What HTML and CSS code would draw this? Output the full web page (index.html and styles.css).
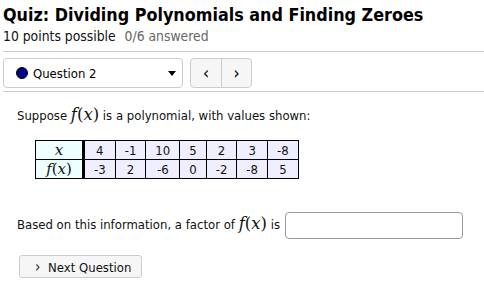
FILE: index.html
```html
<!DOCTYPE html>
<html lang="en">

<head>
  <meta charset="UTF-8">
  <meta name="viewport" content="width=device-width, initial-scale=1.0">
  <title>Quiz</title>
  <link rel="stylesheet" href="styles.css">
</head>

<body>
  <div class="quiz">
    <header class="quiz-head">
      <h1>Quiz: Dividing Polynomials and Finding Zeroes</h1>
      <div class="meta">10 points possible <span class="answered">0/6 answered</span></div>
    </header>

    <div class="qnav">
      <div class="qselect">
        <span class="dot"></span>
        <span class="qlabel">Question 2</span>
        <span class="caret"></span>
      </div>
      <div class="arrows">
        <button class="arrow">&lsaquo;</button>
        <button class="arrow">&rsaquo;</button>
      </div>
    </div>

    <section class="question">
      <p class="intro">Suppose <span class="fx"><i>f</i>(<i>x</i>)</span> is a polynomial, with values shown:</p>

      <table class="values">
        <tr>
          <th><span class="fx"><i>x</i></span></th>
          <td>4</td><td>-1</td><td>10</td><td>5</td><td>2</td><td>3</td><td>-8</td>
        </tr>
        <tr>
          <th><span class="fx"><i>f</i>(<i>x</i>)</span></th>
          <td>-3</td><td>2</td><td>-6</td><td>0</td><td>-2</td><td>-8</td><td>5</td>
        </tr>
      </table>

      <p class="answer">Based on this information, a factor of <span class="fx"><i>f</i>(<i>x</i>)</span> is <input type="text" class="answer-box"></p>

      <button class="next"><span class="chev">&rsaquo;</span> Next Question</button>
    </section>
  </div>
</body>

</html>
```

FILE: styles.css
```css
body {
  margin: 0;
  font-family: "DejaVu Sans Condensed", "Liberation Sans", sans-serif;
  color: #000;
}

.quiz {
  padding: 3px 0 0 3px;
}

.quiz-head h1 {
  margin: 0;
  font-size: 17.8px;
  line-height: 24px;
  font-weight: bold;
}

.meta {
  font-size: 13.8px;
  line-height: 18px;
  color: #111;
  padding-bottom: 6px;
  border-bottom: 1px solid #ccc;
}

.answered {
  color: #666;
  margin-left: 5px;
}

.qnav {
  display: flex;
  gap: 7px;
  padding: 6px 0 3px;
  border-bottom: 1px solid #ccc;
}

.qselect {
  width: 178px;
  height: 28px;
  border: 1px solid #ccc;
  border-radius: 4px;
  display: flex;
  align-items: center;
  font-size: 13px;
}

.dot {
  width: 10px;
  height: 10px;
  border-radius: 50%;
  background: #00008b;
  border: 1px solid #000;
  margin: 0 5px 0 12px;
}

.qlabel {
  flex: 1;
}

.caret {
  width: 0;
  height: 0;
  border-left: 4px solid transparent;
  border-right: 4px solid transparent;
  border-top: 5px solid #000;
  margin-right: 6px;
}

.arrows {
  display: flex;
  border: 1px solid #ccc;
  border-radius: 4px;
  background: #f6f6f6;
  height: 28px;
}

.arrow {
  width: 30px;
  height: 28px;
  border: 0;
  background: none;
  font-family: inherit;
  font-size: 17px;
  padding: 0;
  color: #000;
}

.arrow + .arrow {
  border-left: 1px solid #ccc;
}

.question {
  padding-left: 14px;
  font-size: 13px;
  color: #111;
}

.question p {
  margin: 0;
}

.question .intro {
  padding-top: 14px;
  line-height: 18px;
}

.fx {
  font-family: "DejaVu Serif", "Liberation Serif", serif;
  font-size: 16.5px;
}

.fx i {
  font-style: italic;
}

.values {
  border-collapse: collapse;
  margin: 15px 0 0 18px;
  font-size: 13px;
}

.values th,
.values td {
  border: 1px solid #000;
  height: 17px;
  padding: 0 9px;
  text-align: center;
  font-weight: normal;
  background: #eeeeff;
}

.values th {
  width: 28px;
  background: #eeffff;
  border-right: 3px solid #000;
}

.values th .fx {
  font-size: 15px;
}

.question .answer {
  margin-top: 31px;
  line-height: 27px;
}

.answer-box {
  vertical-align: middle;
  margin: 0 0 0 1px;
  width: 178px;
  box-sizing: border-box;
  height: 27px;
  border: 1px solid #999;
  border-radius: 4px;
}

.next {
  margin: 16px 0 0 2px;
  width: 123px;
  height: 23px;
  border: 1px solid #ccc;
  border-radius: 3px;
  background: #f6f6f6;
  font-family: inherit;
  font-size: 13px;
  color: #111;
  text-align: left;
  padding: 0 0 0 15px;
}

.chev {
  font-size: 15px;
  margin-right: 4px;
}
```
